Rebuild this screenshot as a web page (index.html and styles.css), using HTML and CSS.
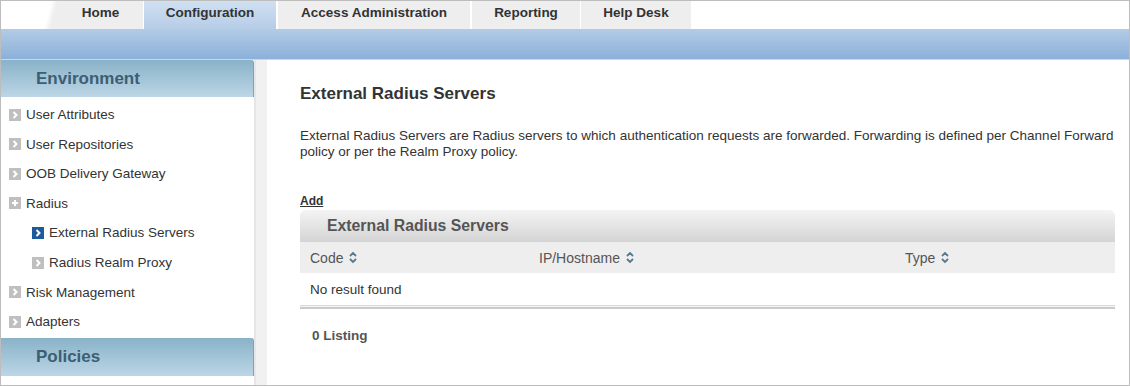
FILE: index.html
```html
<!DOCTYPE html>
<html lang="en">
<head>
<meta charset="utf-8">
<title>External Radius Servers</title>
<link rel="stylesheet" href="styles.css">
</head>
<body>
<div class="frame">
  <div class="tabs">
    <div class="tabs-lead"></div>
    <div class="tab tab-home">Home</div>
    <div class="tab tab-config active">Configuration</div>
    <div class="tab tab-access">Access Administration</div>
    <div class="tab tab-report">Reporting</div>
    <div class="tab tab-help">Help Desk</div>
  </div>
  <div class="band"></div>
  <div class="main">
    <aside class="sidebar">
      <div class="side-head">Environment</div>
      <ul class="menu">
        <li class="item"><span class="ico"><svg viewBox="0 0 12 12"><path d="M4.5 3 L7.5 6 L4.5 9" /></svg></span>User Attributes</li>
        <li class="item"><span class="ico"><svg viewBox="0 0 12 12"><path d="M4.5 3 L7.5 6 L4.5 9" /></svg></span>User Repositories</li>
        <li class="item"><span class="ico"><svg viewBox="0 0 12 12"><path d="M4.5 3 L7.5 6 L4.5 9" /></svg></span>OOB Delivery Gateway</li>
        <li class="item"><span class="ico"><svg viewBox="0 0 12 12"><path d="M6 3 V9 M3 6 H9" /></svg></span>Radius</li>
        <li class="item sub"><span class="ico sel"><svg viewBox="0 0 12 12"><path d="M4.5 3 L7.5 6 L4.5 9" /></svg></span>External Radius Servers</li>
        <li class="item sub"><span class="ico"><svg viewBox="0 0 12 12"><path d="M4.5 3 L7.5 6 L4.5 9" /></svg></span>Radius Realm Proxy</li>
        <li class="item"><span class="ico"><svg viewBox="0 0 12 12"><path d="M4.5 3 L7.5 6 L4.5 9" /></svg></span>Risk Management</li>
        <li class="item"><span class="ico"><svg viewBox="0 0 12 12"><path d="M4.5 3 L7.5 6 L4.5 9" /></svg></span>Adapters</li>
      </ul>
      <div class="side-head">Policies</div>
    </aside>
    <div class="strip"></div>
    <section class="content">
      <h2 class="title">External Radius Servers</h2>
      <p class="desc">External Radius Servers are Radius servers to which authentication requests are forwarded. Forwarding is defined per Channel Forward policy or per the Realm Proxy policy.</p>
      <a class="add" href="#">Add</a>
      <div class="table">
        <div class="caption">External Radius Servers</div>
        <div class="row head">
          <div class="cell">Code <svg class="sort" viewBox="0 0 10 13"><path d="M2 5 L5 2 L8 5 M2 8 L5 11 L8 8" /></svg></div>
          <div class="cell">IP/Hostname <svg class="sort" viewBox="0 0 10 13"><path d="M2 5 L5 2 L8 5 M2 8 L5 11 L8 8" /></svg></div>
          <div class="cell">Type <svg class="sort" viewBox="0 0 10 13"><path d="M2 5 L5 2 L8 5 M2 8 L5 11 L8 8" /></svg></div>
        </div>
        <div class="row body">
          <div class="cell">No result found</div>
        </div>
        <div class="rule"></div>
      </div>
      <div class="listing">0 Listing</div>
    </section>
  </div>
</div>
</body>
</html>
```

FILE: styles.css
```css
* { box-sizing: border-box; }
html, body { margin: 0; padding: 0; background: #fff; }
body { font-family: "Liberation Sans", Arial, sans-serif; color: #333; }

.frame {
  width: 1130px;
  height: 386px;
  border: 1px solid #bdbdbd;
  display: flex;
  flex-direction: column;
  overflow: hidden;
}

.tabs { display: flex; height: 28px; flex: none; }
.tabs-lead {
  width: 57px;
  background: linear-gradient(105deg, #ffffff 0 78%, #eeeeee 88%);
}
.tab {
  background: #eeeeee;
  font-weight: bold;
  font-size: 13.5px;
  color: #333;
  display: flex;
  align-items: center;
  justify-content: center;
  padding-bottom: 6px;
  border-left: 1px solid #fff;
}
.tab-home { width: 85px; border-left: none; }
.tab-config { width: 133px; }
.tab-access { width: 194px; border-left: 2px solid #fff; }
.tab-report { width: 110px; border-left: 2px solid #fff; }
.tab-help { width: 111px; }
.tab.active { background: linear-gradient(#d0e0f1, #b6cde7); }

.band {
  height: 31px;
  flex: none;
  background: linear-gradient(#b2cce6, #8cb0d9);
  border-bottom: 1px solid #c7d9ec;
}

.main { flex: 1; display: flex; min-height: 0; }

.sidebar { width: 253px; flex: none; display: flex; flex-direction: column; }
.side-head {
  height: 37px;
  flex: none;
  background: linear-gradient(#89b2c8, #bcd6e6);
  border-right: 1px solid #7fa2b9;
  border-top-right-radius: 3px;
  color: #3c5e74;
  font-weight: bold;
  font-size: 17px;
  display: flex;
  align-items: center;
  padding-left: 35px;
}
.menu { list-style: none; margin: 0; padding: 3px 0 0; }
.item {
  height: 29.55px;
  display: flex;
  align-items: center;
  font-size: 13.5px;
  color: #333;
  padding-left: 8px;
}
.item.sub { padding-left: 31px; }
.ico {
  width: 12px;
  height: 12px;
  background: #bfbfbf;
  margin-right: 5px;
  display: flex;
}
.ico.sel { background: #1c5a9c; }
.ico svg { width: 12px; height: 12px; }
.ico path { fill: none; stroke: #fff; stroke-width: 2; }
.menu + .side-head { margin-top: 1.5px; height: 38px; }

.strip {
  width: 13px;
  flex: none;
  background: #f1f1f1;
  border-left: 2px solid #e6e6e6;
}

.content { flex: 1; padding: 24px 14px 0 33px; }
.title { margin: 0; font-size: 17px; line-height: 20px; font-weight: bold; color: #333; }
.desc { margin: 24px 0 0; font-size: 13.5px; line-height: 16px; color: #333; }
.add {
  display: block;
  margin-top: 34px;
  font-size: 12px;
  line-height: 14px;
  font-weight: bold;
  color: #333;
  text-decoration: underline;
  width: max-content;
}
.table { margin-top: 2px; }
.caption {
  height: 32px;
  background: linear-gradient(#f4f4f4, #d4d4d4);
  border-radius: 6px 6px 0 0;
  font-weight: bold;
  font-size: 15.8px;
  color: #555;
  display: flex;
  align-items: center;
  padding-left: 27px;
}
.row { display: grid; grid-template-columns: 229px 366px 1fr; }
.row.head { background: #eeeeee; height: 31px; }
.row.body { height: 32px; }
.cell {
  font-size: 14px;
  color: #555;
  display: flex;
  align-items: center;
  padding-left: 10px;
}
.row.body .cell { color: #333; font-size: 13.5px; }
.sort { width: 10px; height: 13px; margin-left: 5px; }
.sort path { fill: none; stroke: #557991; stroke-width: 1.8; }
.rule {
  height: 4px;
  border-top: 1px solid #dadada;
  border-bottom: 2px solid #cacaca;
  background: #f3f3f3;
}
.listing {
  margin-top: 19px;
  padding-left: 12px;
  font-weight: bold;
  font-size: 13.5px;
  line-height: 16px;
  color: #555;
}
```
